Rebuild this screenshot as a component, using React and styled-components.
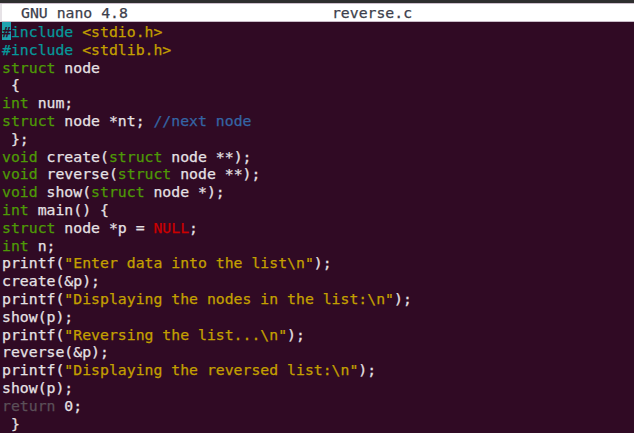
import React from "react";
import styled, { createGlobalStyle } from "styled-components";

const Global = createGlobalStyle`
  html, body { margin: 0; padding: 0; background: #300a24; }
  body { width: 634px; height: 433px; overflow: hidden; }
`;

const COLORS = {
  t: "#e6e1e4",
  k: "#4e9a06",
  s: "#c4a000",
  p: "#06989a",
  c: "#3465a4",
  r: "#cc0000",
  d: "#5b4f58",
};

const Screen = styled.div`
  width: 634px;
  height: 433px;
  background: #300a24;
  display: flex;
  flex-direction: column;
  overflow: hidden;
  font-family: "DejaVu Sans Mono", "Liberation Mono", monospace;
  font-size: 14.8px;
  -webkit-text-stroke: 0.25px currentColor;
`;

const TopStrip = styled.div`
  height: 3px;
  flex: none;
  background: #2e2e2e;
  border-bottom: 1px solid #cdbfcc;
`;

const TitleBar = styled.div`
  height: 17px;
  flex: none;
  background: #ffffff;
  color: #3d3f4c;
  line-height: 17px;
  display: flex;
  padding-left: 19px;
  white-space: pre;
  border-bottom: 1px solid #c9bcc8;
  border-left: 2px solid #e6e2e6;
`;

const FileName = styled.span`
  margin-left: 204px;
`;

const Editor = styled.div`
  flex: 1;
  padding: 1px 0 0 2px;
  display: flex;
  flex-direction: column;
`;

const Line = styled.div`
  flex: none;
  height: 17.8px;
  line-height: 17.8px;
  white-space: pre;
  color: ${COLORS.t};
`;

const Tok = styled.span`
  color: ${(p) => COLORS[p.$c] || COLORS.t};
`;

const Cursor = styled.span`
  background: #1fa3b0;
  color: #300a24;
  display: inline-block;
  height: 18px;
  margin-top: -1px;
  vertical-align: top;
  line-height: 19px;
`;

const LINES = [
  [["cursor", "#"], ["p", "include "], ["s", "<stdio.h>"]],
  [["p", "#include "], ["s", "<stdlib.h>"]],
  [["k", "struct"], ["t", " node"]],
  [["t", " {"]],
  [["k", "int"], ["t", " num;"]],
  [["k", "struct"], ["t", " node *nt; "], ["c", "//next node"]],
  [["t", " };"]],
  [["k", "void"], ["t", " create("], ["k", "struct"], ["t", " node **);"]],
  [["k", "void"], ["t", " reverse("], ["k", "struct"], ["t", " node **);"]],
  [["k", "void"], ["t", " show("], ["k", "struct"], ["t", " node *);"]],
  [["k", "int"], ["t", " main() {"]],
  [["k", "struct"], ["t", " node *p = "], ["r", "NULL"], ["t", ";"]],
  [["k", "int"], ["t", " n;"]],
  [["t", "printf("], ["s", "\"Enter data into the list\\n\""], ["t", ");"]],
  [["t", "create(&p);"]],
  [["t", "printf("], ["s", "\"Displaying the nodes in the list:\\n\""], ["t", ");"]],
  [["t", "show(p);"]],
  [["t", "printf("], ["s", "\"Reversing the list...\\n\""], ["t", ");"]],
  [["t", "reverse(&p);"]],
  [["t", "printf("], ["s", "\"Displaying the reversed list:\\n\""], ["t", ");"]],
  [["t", "show(p);"]],
  [["d", "return"], ["t", " 0;"]],
  [["t", " }"]],
];

export default function App() {
  return (
    <>
      <Global />
      <Screen>
        <TopStrip />
        <TitleBar>
          <span>GNU nano 4.8</span>
          <FileName>reverse.c</FileName>
        </TitleBar>
        <Editor>
          {LINES.map((line, i) => (
            <Line key={i}>
              {line.map(([c, text], j) =>
                c === "cursor" ? (
                  <Cursor key={j}>{text}</Cursor>
                ) : (
                  <Tok key={j} $c={c}>
                    {text}
                  </Tok>
                )
              )}
            </Line>
          ))}
        </Editor>
      </Screen>
    </>
  );
}
